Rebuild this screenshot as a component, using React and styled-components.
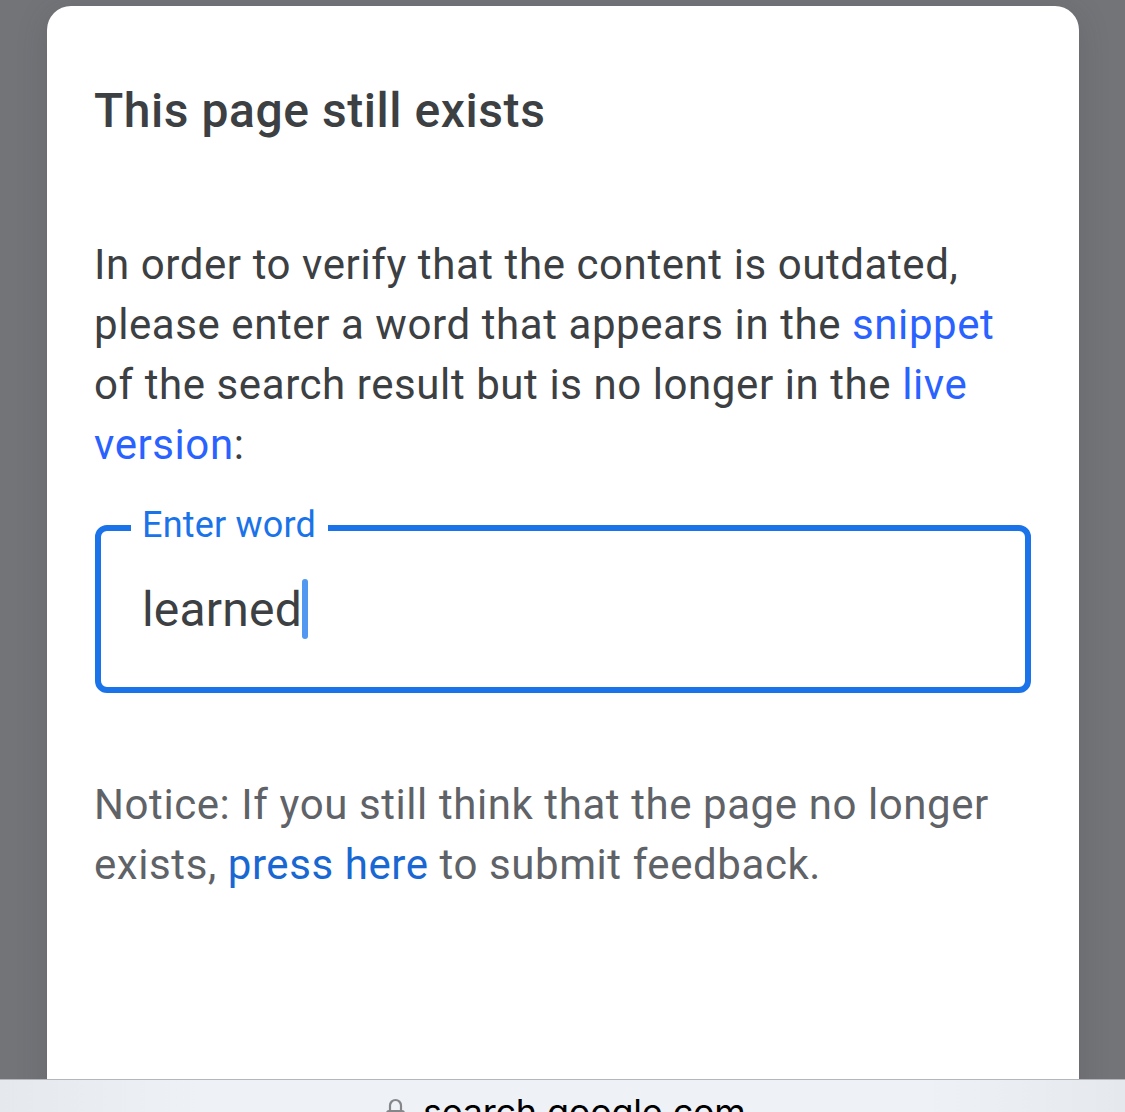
import styled, { createGlobalStyle } from "styled-components"

const GlobalStyle = createGlobalStyle`
  * {
    box-sizing: border-box;
  }
  body {
    margin: 0;
    overflow: hidden;
    background-color: #737478;
    font-family: Roboto, sans-serif;
  }
`

const Screen = styled.div`
  height: 1112px;
  display: flex;
  flex-direction: column;
  overflow: hidden;
`

const Backdrop = styled.main`
  flex: 0 0 1079px;
  padding: 6px 46px 0 47px;
  overflow: hidden;
`

const Dialog = styled.section`
  height: 1120px;
  padding: 69px 48px 0 47px;
  border-radius: 24px;
  background-color: white;
  color: #3c4043;
  box-shadow: 0 6px 30px rgba(60, 62, 72, 0.22);
`

const Title = styled.h1`
  margin: 0 0 88px;
  font: 480 48px/72px Roboto, sans-serif;
  letter-spacing: 0.55px;
`

const Text = styled.p`
  margin: 0;
  font-size: 42px;
  line-height: 60px;
  letter-spacing: 0.58px;
  white-space: nowrap;
  color: ${(props) => (props.$muted ? "#5f6368" : "#3c4043")};
`

const Link = styled.a`
  color: ${(props) => (props.$dark ? "#1967d2" : "#2962ff")};
  text-decoration: none;
`

const Field = styled.fieldset`
  height: 186px;
  margin: 32px 0 82px 1px;
  padding: 30px 41px 0;
  border: 6px solid #1a73e8;
  border-radius: 12px;
  display: flex;
  align-items: flex-start;
`

const Label = styled.legend`
  margin-left: -11px;
  padding: 0 11px;
  width: 197px;
  height: 42px;
  font-size: 36px;
  line-height: 37px;
  letter-spacing: 0.2px;
  white-space: nowrap;
  color: #1a73e8;
`

const Value = styled.span`
  height: 60px;
  font-size: 48px;
  line-height: 62px;
  letter-spacing: 0.2px;
`

const Caret = styled.span`
  width: 6px;
  height: 60px;
  border-radius: 3px;
  background-color: #5398f0;
`

const AddressBar = styled.footer`
  flex: 0 0 33px;
  padding-top: 9px;
  padding-left: 386px;
  border-top: 1px solid #b4b6bc;
  display: flex;
  align-items: flex-start;
  gap: 17px;
  overflow: hidden;
  background: linear-gradient(90deg, #e5e8ed, #eef2f7 18%, #eef1f6 82%, #e5e8ed);
`

const LockIcon = styled.svg`
  flex: none;
  margin-top: 9px;
`

const Host = styled.span`
  font: 400 36px/46px Inter, sans-serif;
  letter-spacing: -0.25px;
  color: black;
`

export default function App() {
  return (
    <>
      <GlobalStyle />
      <Screen>
        <Backdrop>
          <Dialog>
            <Title>This page still exists</Title>
            <Text>
              In order to verify that the content is outdated,
              <br />
              please enter a word that appears in the <Link>snippet</Link>
              <br />
              of the search result but is no longer in the <Link>live</Link>
              <br />
              <Link>version</Link>:
            </Text>
            <Field>
              <Label>Enter word</Label>
              <Value>learned</Value>
              <Caret />
            </Field>
            <Text $muted>
              Notice: If you still think that the page no longer
              <br />
              exists, <Link $dark>press here</Link> to submit feedback.
            </Text>
          </Dialog>
        </Backdrop>
        <AddressBar>
          <LockIcon width="20" height="30" viewBox="0 0 20 30" fill="none">
            <path d="M4 13V7.5a5.5 5.5 0 0 1 11 0V13" stroke="#85868a" strokeWidth="2.2" />
            <rect x="0" y="12" width="19" height="16" rx="3" fill="#85868a" />
          </LockIcon>
          <Host>search.google.com</Host>
        </AddressBar>
      </Screen>
    </>
  )
}
